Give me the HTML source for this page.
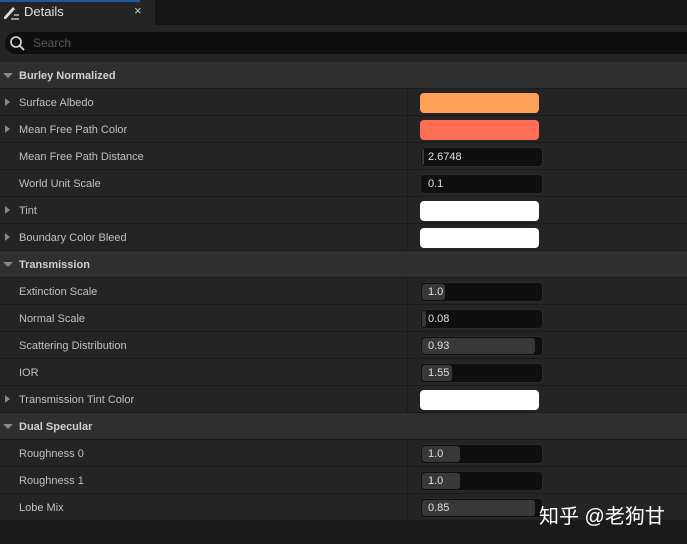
<!DOCTYPE html>
<html><head><meta charset="utf-8"><style>
*{margin:0;padding:0;box-sizing:border-box}
body{width:687px;height:544px;background:#1a1a1a;font-family:"Liberation Sans",sans-serif;position:relative;overflow:hidden;color:#c8c8c8}
.a{position:absolute}
.row{position:absolute;left:0;width:687px;height:27px;background:#242424;border-bottom:1px solid #1a1a1a}
.hdr{background:#2f2f2f}
.lbl{position:absolute;left:19px;top:8px;font-size:11px;color:#c0c0c0}
.hdr .lbl{font-weight:bold;color:#d0d0d0}
.tri{position:absolute;left:5px;top:9px;width:0;height:0;border-top:4px solid transparent;border-bottom:4px solid transparent;border-left:5px solid #888}
.tdn{position:absolute;left:3px;top:11px;width:0;height:0;border-left:5px solid transparent;border-right:5px solid transparent;border-top:5px solid #888}
.sep{position:absolute;left:407px;top:0;width:1px;height:27px;background:#1a1a1a}
.sw{position:absolute;left:420px;top:4px;width:119px;height:20px;border-radius:4px}
.box{position:absolute;left:420px;top:4px;width:123px;height:20px;border-radius:4px;background:#0f0f0f;border:1px solid #2a2a2a;overflow:hidden}
.fill{position:absolute;left:1px;top:1px;bottom:1px;background:#383838;border-radius:3px}
.v{position:absolute;left:7px;top:3px;font-size:11px;color:#e0e0e0}
</style></head><body>
<div class="a" style="left:0;top:0;width:687px;height:25px;background:#151515"></div>
<div class="a" style="left:0;top:0;width:155px;height:25px;background:#242424"></div>
<div class="a" style="left:0;top:0;width:140px;height:2px;background:#1e5a9a"></div>
<svg class="a" style="left:2px;top:3px" width="18" height="18" viewBox="0 0 18 18"><path d="M2 14 L11 4 L13 6 L4 16 L2 16Z" fill="#ddd"/><path d="M9 16h8M12 12h5" stroke="#bbb" stroke-width="1.5"/></svg>
<div class="a" style="left:24px;top:4px;font-size:13px;color:#e0e0e0">Details</div>
<div class="a" style="left:134px;top:3px;font-size:13px;color:#ccc">×</div>
<div class="a" style="left:0;top:25px;width:687px;height:37px;background:#242424"></div>
<div class="a" style="left:5px;top:32px;width:682px;height:22px;background:#0f0f0f;border-radius:11px 0 0 11px"></div>
<svg class="a" style="left:9px;top:35px" width="18" height="18" viewBox="0 0 18 18"><circle cx="7" cy="7" r="5" stroke="#ddd" stroke-width="1.6" fill="none"/><path d="M10.5 10.5 L15 15" stroke="#ddd" stroke-width="1.8"/></svg>
<div class="a" style="left:33px;top:36px;font-size:12px;color:#555">Search</div>

<div class="row hdr" style="top:62px"><div class="tdn"></div><div class="lbl">Burley Normalized</div></div>
<div class="row" style="top:89px"><div class="tri"></div><div class="lbl">Surface Albedo</div><div class="sep"></div><div class="sw" style="background:#ffa057"></div></div>
<div class="row" style="top:116px"><div class="tri"></div><div class="lbl">Mean Free Path Color</div><div class="sep"></div><div class="sw" style="background:#ff6e55"></div></div>
<div class="row" style="top:143px"><div class="lbl">Mean Free Path Distance</div><div class="sep"></div><div class="box"><div class="fill" style="width:2px"></div><div class="v">2.6748</div></div></div>
<div class="row" style="top:170px"><div class="lbl">World Unit Scale</div><div class="sep"></div><div class="box"><div class="v">0.1</div></div></div>
<div class="row" style="top:197px"><div class="tri"></div><div class="lbl">Tint</div><div class="sep"></div><div class="sw" style="background:#fff"></div></div>
<div class="row" style="top:224px"><div class="tri"></div><div class="lbl">Boundary Color Bleed</div><div class="sep"></div><div class="sw" style="background:#fff"></div></div>
<div class="row hdr" style="top:251px"><div class="tdn"></div><div class="lbl">Transmission</div></div>
<div class="row" style="top:278px"><div class="lbl">Extinction Scale</div><div class="sep"></div><div class="box"><div class="fill" style="width:23px"></div><div class="v">1.0</div></div></div>
<div class="row" style="top:305px"><div class="lbl">Normal Scale</div><div class="sep"></div><div class="box"><div class="fill" style="width:4px"></div><div class="v">0.08</div></div></div>
<div class="row" style="top:332px"><div class="lbl">Scattering Distribution</div><div class="sep"></div><div class="box"><div class="fill" style="width:113px"></div><div class="v">0.93</div></div></div>
<div class="row" style="top:359px"><div class="lbl">IOR</div><div class="sep"></div><div class="box"><div class="fill" style="width:30px"></div><div class="v">1.55</div></div></div>
<div class="row" style="top:386px"><div class="tri"></div><div class="lbl">Transmission Tint Color</div><div class="sep"></div><div class="sw" style="background:#fff"></div></div>
<div class="row hdr" style="top:413px"><div class="tdn"></div><div class="lbl">Dual Specular</div></div>
<div class="row" style="top:440px"><div class="lbl">Roughness 0</div><div class="sep"></div><div class="box"><div class="fill" style="width:38px"></div><div class="v">1.0</div></div></div>
<div class="row" style="top:467px"><div class="lbl">Roughness 1</div><div class="sep"></div><div class="box"><div class="fill" style="width:38px"></div><div class="v">1.0</div></div></div>
<div class="row" style="top:494px"><div class="lbl">Lobe Mix</div><div class="sep"></div><div class="box"><div class="fill" style="width:113px"></div><div class="v">0.85</div></div></div>
<div class="a" style="left:539px;top:500px;font-size:20px;color:#fff;font-family:'Liberation Sans','Noto Sans CJK SC',sans-serif">知乎 @老狗甘</div>
</body></html>
